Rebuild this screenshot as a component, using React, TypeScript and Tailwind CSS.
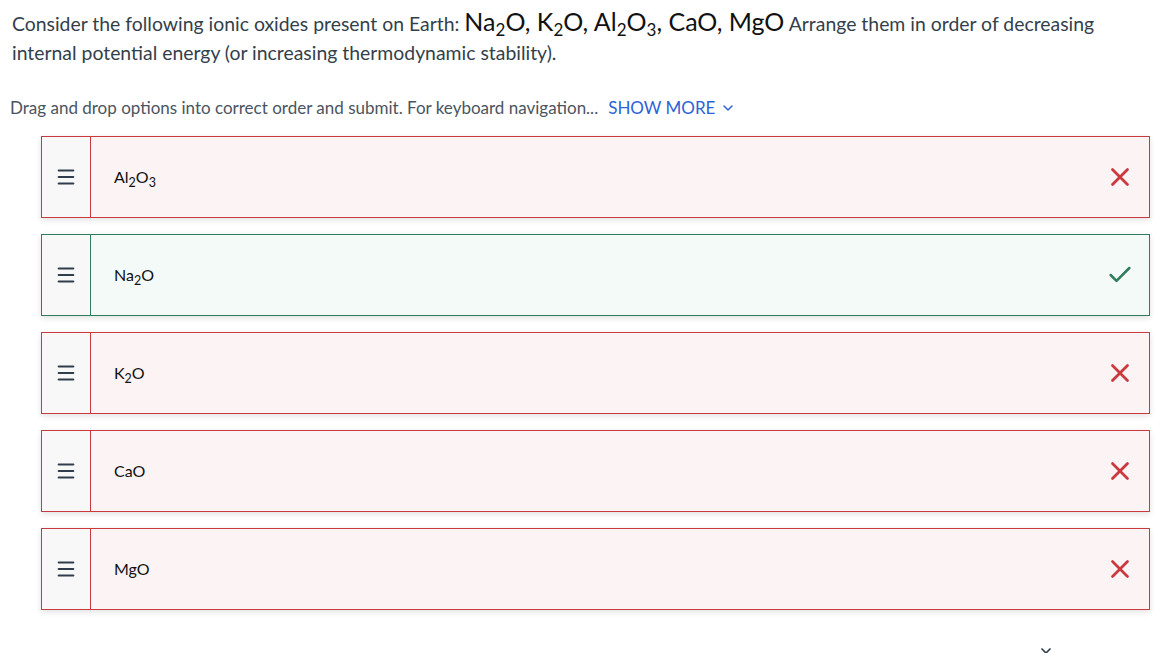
import { Menu, X, Check, ChevronDown } from 'lucide-react';

type Item = { label: React.ReactNode; ok: boolean };

function S({ n }: { n: string }) {
  return <span className="inline-block text-[12.5px] translate-y-[4px] leading-none">{n}</span>;
}

function Big({ n }: { n: string }) {
  return <span className="text-[17px] relative top-[5px] leading-none">{n}</span>;
}

const items: Item[] = [
  { label: <>Al<S n="2" />O<S n="3" /></>, ok: false },
  { label: <>Na<S n="2" />O</>, ok: true },
  { label: <>K<S n="2" />O</>, ok: false },
  { label: <>CaO</>, ok: false },
  { label: <>MgO</>, ok: false },
];

function Row({ item }: { item: Item }) {
  const border = item.ok ? 'border-[#2f7d5c]' : 'border-[#c93a3e]';
  const bg = item.ok ? 'bg-[#f4faf8]' : 'bg-[#fcf3f4]';
  return (
    <div className={`flex h-[82px] border ${border} ${bg} shadow-[0_2px_6px_rgba(0,0,0,0.12)]`}>
      <div className={`w-[49px] shrink-0 flex items-center justify-center bg-[#f8f8f9] border-r ${border}`}>
        <Menu className="w-[22px] h-[22px] text-[#2f3d4c]" strokeWidth={2.2} />
      </div>
      <div className="flex-1 flex items-center pl-[23px] text-[16px] text-[#111]">
        <span>{item.label}</span>
      </div>
      <div className="w-[56px] flex items-center justify-center pr-[2px]">
        {item.ok ? (
          <Check className="w-[28px] h-[28px] text-[#2f7d5c]" strokeWidth={2.2} />
        ) : (
          <X className="w-[30px] h-[30px] text-[#c93a3e]" strokeWidth={2.2} />
        )}
      </div>
    </div>
  );
}

export default function App() {
  return (
    <div className="w-[1174px] h-[653px] overflow-hidden bg-white font-['Lato','Open_Sans',sans-serif] text-[#333f4b]">
      <div className="pl-[12px] pt-[7px] pr-[60px] text-[19.4px] leading-[29px]">
        Consider the following ionic oxides present on Earth:{' '}
        <span className="text-[25px] text-[#111]">
          Na<Big n="2" />O, K<Big n="2" />O, Al<Big n="2" />O<Big n="3" />, CaO, MgO
        </span>{' '}
        Arrange them in order of decreasing internal potential energy (or increasing thermodynamic stability).
      </div>
      <div className="pl-[10px] mt-[29px] text-[17px] leading-[24px] text-[#4a5561] flex items-center">
        Drag and drop options into correct order and submit. For keyboard navigation...
        <span className="ml-[10px] text-[#2c63d6] flex items-center">
          SHOW MORE
          <ChevronDown className="w-[16px] h-[16px] ml-[5px]" strokeWidth={2.2} />
        </span>
      </div>
      <div className="ml-[41px] w-[1109px] mt-[16px] flex flex-col gap-[16px]">
        {items.map((it, i) => (
          <Row key={i} item={it} />
        ))}
      </div>
      <div className="ml-[1038px] mt-[33px]">
        <ChevronDown className="w-[16px] h-[16px] text-[#2f3d4c]" strokeWidth={2.5} />
      </div>
    </div>
  );
}
